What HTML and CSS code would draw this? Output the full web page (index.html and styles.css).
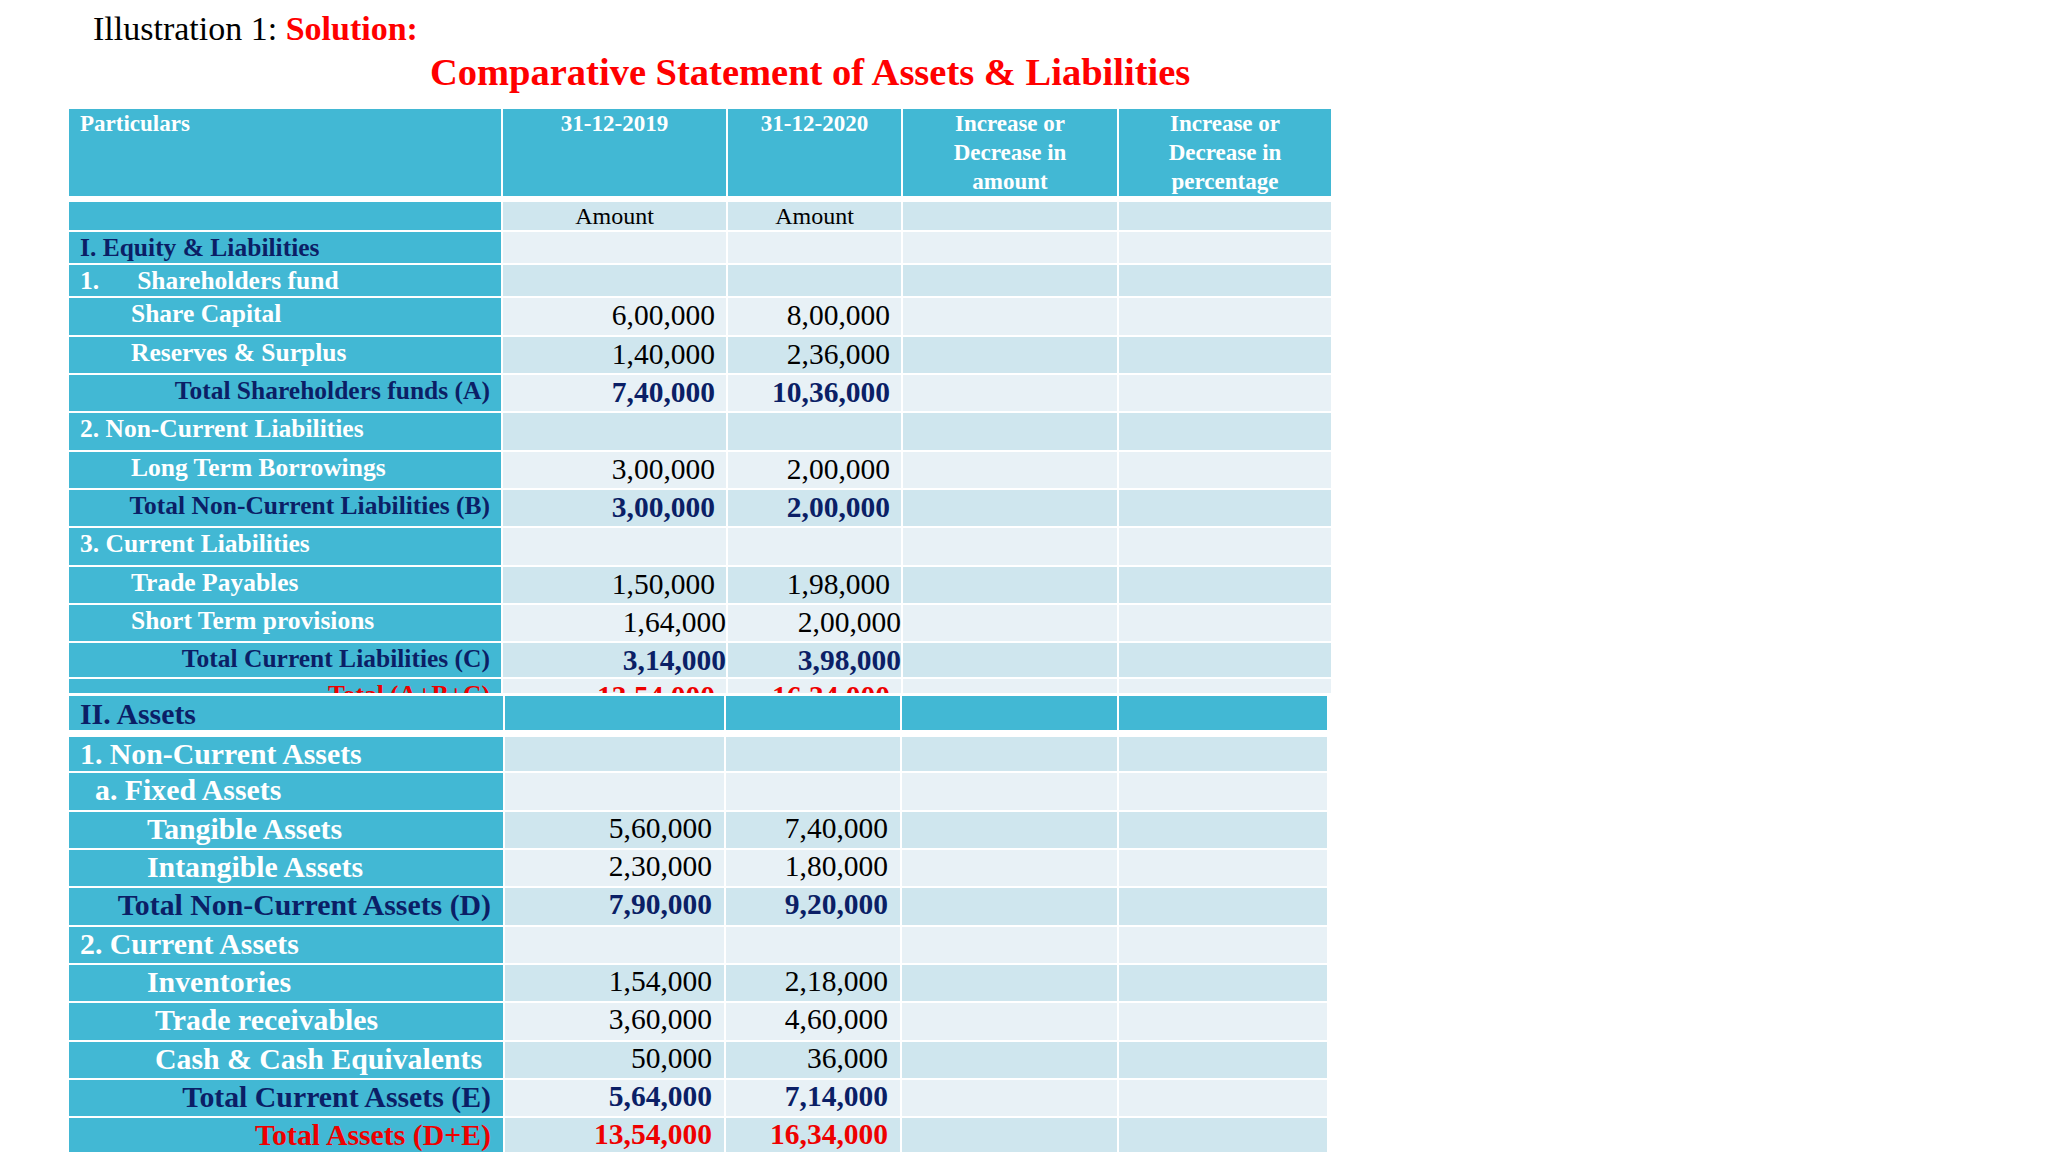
FILE: index.html
```html
<!DOCTYPE html>
<html>
<head>
<meta charset="utf-8">
<title>Comparative Statement of Assets &amp; Liabilities</title>
<link rel="stylesheet" href="styles.css">
</head>
<body>
<div class="page">
  <div class="title1">Illustration 1: <span class="sol">Solution:</span></div>
  <div class="title2">Comparative Statement of Assets &amp; Liabilities</div>

  <div class="clip">
    <div class="t1">
      <div class="row head">
        <div class="c hl">Particulars</div>
        <div class="c ctr">31-12-2019</div>
        <div class="c ctr">31-12-2020</div>
        <div class="c ctr">Increase or<br>Decrease in<br>amount</div>
        <div class="c ctr">Increase or<br>Decrease in<br>percentage</div>
      </div>
      <div class="row amt dk">
        <div class="c"></div>
        <div class="c d">Amount</div>
        <div class="c d">Amount</div>
        <div class="c d"></div>
        <div class="c d"></div>
      </div>
      <div class="row h31 lt">
        <div class="c lab navy">I. Equity &amp; Liabilities</div>
        <div class="c d"></div><div class="c d"></div><div class="c d"></div><div class="c d"></div>
      </div>
      <div class="row h31 dk">
        <div class="c lab">1.<span class="gap1">Shareholders fund</span></div>
        <div class="c d"></div><div class="c d"></div><div class="c d"></div><div class="c d"></div>
      </div>
      <div class="row h37 lt">
        <div class="c lab ind">Share Capital</div>
        <div class="c d num">6,00,000</div><div class="c d num">8,00,000</div><div class="c d"></div><div class="c d"></div>
      </div>
      <div class="row dk">
        <div class="c lab ind">Reserves &amp; Surplus</div>
        <div class="c d num">1,40,000</div><div class="c d num">2,36,000</div><div class="c d"></div><div class="c d"></div>
      </div>
      <div class="row lt">
        <div class="c lab tot navy">Total Shareholders funds (A)</div>
        <div class="c d num b navy">7,40,000</div><div class="c d num b navy">10,36,000</div><div class="c d"></div><div class="c d"></div>
      </div>
      <div class="row h37 dk">
        <div class="c lab">2. Non-Current Liabilities</div>
        <div class="c d"></div><div class="c d"></div><div class="c d"></div><div class="c d"></div>
      </div>
      <div class="row lt">
        <div class="c lab ind">Long Term Borrowings</div>
        <div class="c d num">3,00,000</div><div class="c d num">2,00,000</div><div class="c d"></div><div class="c d"></div>
      </div>
      <div class="row dk">
        <div class="c lab tot navy">Total Non-Current Liabilities (B)</div>
        <div class="c d num b navy">3,00,000</div><div class="c d num b navy">2,00,000</div><div class="c d"></div><div class="c d"></div>
      </div>
      <div class="row h37 lt">
        <div class="c lab">3. Current Liabilities</div>
        <div class="c d"></div><div class="c d"></div><div class="c d"></div><div class="c d"></div>
      </div>
      <div class="row dk">
        <div class="c lab ind">Trade Payables</div>
        <div class="c d num">1,50,000</div><div class="c d num">1,98,000</div><div class="c d"></div><div class="c d"></div>
      </div>
      <div class="row lt">
        <div class="c lab ind">Short Term provisions</div>
        <div class="c d num flush">1,64,000</div><div class="c d num flush">2,00,000</div><div class="c d"></div><div class="c d"></div>
      </div>
      <div class="row h34 dk">
        <div class="c lab tot navy">Total Current Liabilities (C)</div>
        <div class="c d num b navy flush">3,14,000</div><div class="c d num b navy flush">3,98,000</div><div class="c d"></div><div class="c d"></div>
      </div>
      <div class="row lt">
        <div class="c lab tot red">Total (A+B+C)</div>
        <div class="c d num b red">13,54,000</div><div class="c d num b red">16,34,000</div><div class="c d"></div><div class="c d"></div>
      </div>
    </div>
  </div>

  <div class="t2">
    <div class="row h34 top">
      <div class="c lab navy">II. Assets</div>
      <div class="c"></div><div class="c"></div><div class="c"></div><div class="c"></div>
    </div>
    <div class="row h34 dk sep">
      <div class="c lab">1. Non-Current Assets</div>
      <div class="c d"></div><div class="c d"></div><div class="c d"></div><div class="c d"></div>
    </div>
    <div class="row h37 lt">
      <div class="c lab ia">a. Fixed Assets</div>
      <div class="c d"></div><div class="c d"></div><div class="c d"></div><div class="c d"></div>
    </div>
    <div class="row dk">
      <div class="c lab ib">Tangible Assets</div>
      <div class="c d num">5,60,000</div><div class="c d num">7,40,000</div><div class="c d"></div><div class="c d"></div>
    </div>
    <div class="row lt">
      <div class="c lab ib">Intangible Assets</div>
      <div class="c d num">2,30,000</div><div class="c d num">1,80,000</div><div class="c d"></div><div class="c d"></div>
    </div>
    <div class="row h37 dk">
      <div class="c lab tot navy">Total Non-Current Assets (D)</div>
      <div class="c d num b navy">7,90,000</div><div class="c d num b navy">9,20,000</div><div class="c d"></div><div class="c d"></div>
    </div>
    <div class="row lt">
      <div class="c lab">2. Current Assets</div>
      <div class="c d"></div><div class="c d"></div><div class="c d"></div><div class="c d"></div>
    </div>
    <div class="row dk">
      <div class="c lab ib">Inventories</div>
      <div class="c d num">1,54,000</div><div class="c d num">2,18,000</div><div class="c d"></div><div class="c d"></div>
    </div>
    <div class="row h37 lt">
      <div class="c lab ic">Trade receivables</div>
      <div class="c d num">3,60,000</div><div class="c d num">4,60,000</div><div class="c d"></div><div class="c d"></div>
    </div>
    <div class="row dk">
      <div class="c lab ic">Cash &amp; Cash Equivalents</div>
      <div class="c d num">50,000</div><div class="c d num">36,000</div><div class="c d"></div><div class="c d"></div>
    </div>
    <div class="row lt">
      <div class="c lab tot navy">Total Current Assets (E)</div>
      <div class="c d num b navy">5,64,000</div><div class="c d num b navy">7,14,000</div><div class="c d"></div><div class="c d"></div>
    </div>
    <div class="row dk">
      <div class="c lab tot red">Total Assets (D+E)</div>
      <div class="c d num b red">13,54,000</div><div class="c d num b red">16,34,000</div><div class="c d"></div><div class="c d"></div>
    </div>
  </div>
</div>
</body>
</html>
```
FILE: styles.css
```css
html, body {
  margin: 0;
  padding: 0;
  background: #ffffff;
  overflow: hidden;
}
body {
  font-family: "Liberation Serif", "Times New Roman", serif;
  color: #000000;
}
.page {
  width: 2048px;
  height: 1152px;
  overflow: hidden;
}
.title1 {
  margin-top: 9px;
  padding-left: 93px;
  height: 40px;
  line-height: 40px;
  font-size: 34px;
  white-space: nowrap;
}
.title1 .sol {
  color: #ff0000;
  font-weight: bold;
}
.title2 {
  margin-top: 3px;
  padding-left: 430px;
  height: 40px;
  line-height: 40px;
  font-size: 38.5px;
  font-weight: bold;
  color: #ff0000;
  white-space: nowrap;
}

/* ---------- table 1 ---------- */
.clip {
  margin-top: 17px;
  margin-left: 69px;
  height: 584px;
  overflow: hidden;
}
.t1 {
  display: flex;
  flex-direction: column;
  gap: 2px;
}
.t1 .row {
  display: grid;
  grid-template-columns: 432px 223px 173px 214px 212px;
  column-gap: 2px;
  height: 36px;
}
.t1 .row.head {
  height: 87px;
  margin-bottom: 4px;
}
.t1 .row.amt { height: 28px; }
.row.h31 { height: 31px; }
.row.h34 { height: 34px; }
.row.h37 { height: 37px; }

.c {
  background: #42b8d4;
  overflow: hidden;
  white-space: nowrap;
  box-sizing: border-box;
}
.row.dk .c.d { background: #cfe6ee; }
.row.lt .c.d { background: #e8f1f6; }

.head .c {
  color: #ffffff;
  font-weight: bold;
  font-size: 23px;
  line-height: 29px;
  padding-top: 0;
}
.head .c.hl { padding-left: 11px; }
.ctr { text-align: center; }

.amt .c.d {
  font-size: 24px;
  line-height: 24px;
  padding-top: 2px;
  text-align: center;
}

.t1 .lab {
  color: #ffffff;
  font-weight: bold;
  font-size: 25.5px;
  line-height: 25px;
  padding: 3px 11px 0 11px;
}
.t1 .lab.ind { padding-left: 62px; }
.gap1 { margin-left: 38px; }
.t1 .lab.tot { text-align: right; }

.t1 .num {
  font-size: 29.5px;
  line-height: 29.5px;
  padding: 3px 11px 0 0;
  text-align: right;
}
.t1 .num.flush { padding-right: 0; }

.b { font-weight: bold; }

/* ---------- table 2 ---------- */
.t2 {
  margin-left: 69px;
  padding-top: 3px;
  background: #ffffff;
  display: flex;
  flex-direction: column;
  gap: 2px;
  width: 1258px;
}
.t2 .row {
  display: grid;
  grid-template-columns: 434px 219px 174px 215px 208px;
  column-gap: 2px;
  height: 36px;
}
.t2 .row.h34 { height: 34px; }
.t2 .row.h37 { height: 37px; }
.t2 .row.sep { margin-top: 5px; }
.t2 .lab {
  color: #ffffff;
  font-weight: bold;
  font-size: 29.8px;
  line-height: 29.5px;
  padding: 2px 12px 0 11px;
}
.t2 .row.top .lab { padding-top: 3px; }
.t2 .lab.ia { padding-left: 26px; }
.t2 .lab.ib { padding-left: 78px; }
.t2 .lab.ic { padding-left: 86px; }
.t2 .lab.tot { text-align: right; }
.t2 .num {
  font-size: 29.5px;
  line-height: 29.5px;
  padding: 2px 12px 0 0;
  text-align: right;
}

/* colour variants (placed last, higher specificity) */
.row .c.navy { color: #0b1f66; }
.row .c.red { color: #ee0000; }
```
